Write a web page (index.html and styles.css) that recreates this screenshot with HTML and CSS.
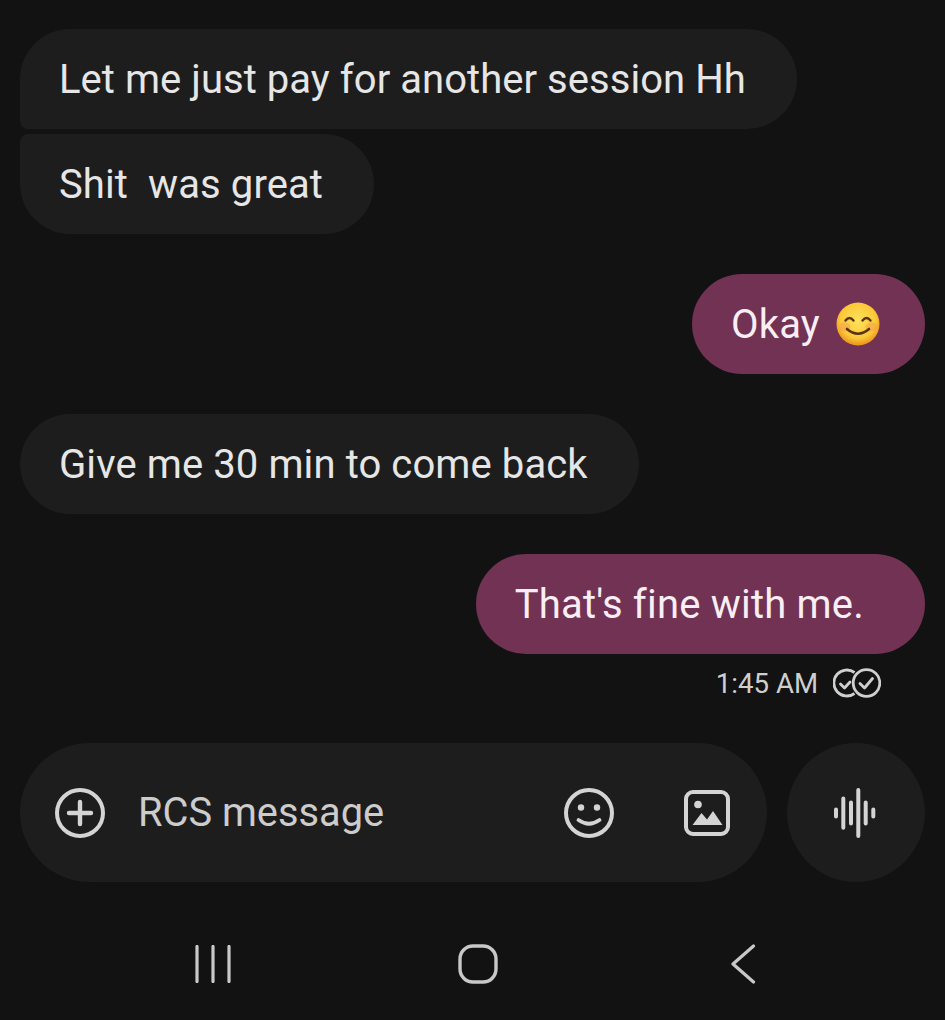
FILE: index.html
```html
<!DOCTYPE html>
<html lang="en">
<head>
<meta charset="utf-8">
<title>Messages</title>
<link rel="stylesheet" href="styles.css">
</head>
<body>
<main class="screen">
  <section class="thread">
    <div class="row in first"><div class="bubble in tail-bottom">Let me just pay for another session Hh</div></div>
    <div class="row in second"><div class="bubble in tail-top wide">Shit&nbsp; was great</div></div>
    <div class="row out gap"><div class="bubble out with-emoji"><span>Okay</span><svg class="emoji" viewBox="0 0 44 44" aria-hidden="true">
        <defs>
          <radialGradient id="face" cx="50%" cy="42%" r="55%">
            <stop offset="0%" stop-color="#fde25a"/>
            <stop offset="75%" stop-color="#fbc93a"/>
            <stop offset="100%" stop-color="#ee9a1e"/>
          </radialGradient>
        </defs>
        <circle cx="22" cy="22" r="21.5" fill="url(#face)"/>
        <ellipse cx="8.5" cy="25" rx="6" ry="4.5" fill="#f4a04e" opacity=".55"/>
        <ellipse cx="35.5" cy="25" rx="6" ry="4.5" fill="#f4a04e" opacity=".55"/>
        <path d="M9.5 18.5q4-5 8 0M26.500 18.500q4-5 8 0" fill="none" stroke="#5a3410" stroke-width="2.4" stroke-linecap="round"/>
        <path d="M11 27q11 9.500 22 0" fill="none" stroke="#5a3410" stroke-width="2.6" stroke-linecap="round"/>
      </svg></div></div>
    <div class="row in gap"><div class="bubble in wide">Give me 30 min to come back</div></div>
    <div class="row out gap"><div class="bubble out">That's fine with me.</div></div>
    <div class="status">
      <span class="time">1:45 AM</span>
      <svg class="ticks" viewBox="0 0 48 32" aria-hidden="true">
        <path d="M21.500 5.500A13 13 0 1 0 21.500 26.500" fill="none" stroke="#cfcfcf" stroke-width="2.800"/>
        <circle cx="33.500" cy="16" r="13.300" fill="none" stroke="#cfcfcf" stroke-width="2.800"/>
        <path d="M27 16.500l4.500 4.500 8-9.500" fill="none" stroke="#cfcfcf" stroke-width="2.800" stroke-linecap="round" stroke-linejoin="round"/>
        <path d="M7.500 17l4 4 5.500-6" fill="none" stroke="#cfcfcf" stroke-width="2.800" stroke-linecap="round" stroke-linejoin="round"/>
      </svg>
    </div>
  </section>

  <section class="composer">
    <div class="field">
      <svg class="icon plus" viewBox="0 0 50 50" aria-hidden="true">
        <circle cx="25" cy="25" r="23" fill="none" stroke="#d4d4d4" stroke-width="4"/>
        <path d="M25 14v22M14 25h22" fill="none" stroke="#d4d4d4" stroke-width="4.400" stroke-linecap="round"/>
      </svg>
      <span class="placeholder">RCS message</span>
      <svg class="icon smile" viewBox="0 0 50 50" aria-hidden="true">
        <circle cx="25" cy="25" r="23" fill="none" stroke="#d4d4d4" stroke-width="4"/>
        <circle cx="17" cy="19.500" r="3.200" fill="#d4d4d4"/>
        <circle cx="33" cy="19.500" r="3.200" fill="#d4d4d4"/>
        <path d="M14.500 32q10.500 7.500 21 0" fill="none" stroke="#d4d4d4" stroke-width="3.800" stroke-linecap="round"/>
      </svg>
      <svg class="icon gallery" viewBox="0 0 46 46" aria-hidden="true">
        <rect x="2" y="2" width="42" height="42" rx="7" fill="none" stroke="#d4d4d4" stroke-width="4"/>
        <circle cx="14" cy="14.500" r="3.800" fill="#d4d4d4"/>
        <path d="M8.500 35l9-12 5.500 6.500 6-8.500 9.500 14z" fill="#d4d4d4"/>
      </svg>
    </div>
    <div class="mic">
      <svg class="wave" viewBox="0 0 44 50" aria-hidden="true">
        <path d="M2 21.500v7M9.300 10.500v29.300M17 14.500v21M24.300 2v46M31.700 14.500v21M39.300 21.500v7" fill="none" stroke="#d4d4d4" stroke-width="4" stroke-linecap="round"/>
      </svg>
    </div>
  </section>

  <nav class="navbar">
    <svg class="nav recents" viewBox="0 0 38 38" aria-hidden="true">
      <path d="M3 1.500v35M19 1.500v35M35 1.500v35" fill="none" stroke="#c8c8c8" stroke-width="3.200" stroke-linecap="round"/>
    </svg>
    <svg class="nav home" viewBox="0 0 40 40" aria-hidden="true">
      <rect x="2" y="2" width="36" height="36" rx="13" fill="none" stroke="#c8c8c8" stroke-width="3.400"/>
    </svg>
    <svg class="nav back" viewBox="0 0 26 40" aria-hidden="true">
      <path d="M23.500 2 3 20l20.500 18" fill="none" stroke="#c8c8c8" stroke-width="3.200" stroke-linecap="round" stroke-linejoin="round"/>
    </svg>
  </nav>
</main>
</body>
</html>
```
FILE: styles.css
```css
* { box-sizing: border-box; }
html, body { margin: 0; padding: 0; background: #121212; }
body { width: 945px; height: 1020px; overflow: hidden; font-family: Roboto, "Liberation Sans", sans-serif; }
.screen { display: flex; flex-direction: column; height: 1020px; padding: 29px 20px 0; }
.thread { display: flex; flex-direction: column; }
.row { display: flex; }
.row.in { justify-content: flex-start; }
.row.out { justify-content: flex-end; }
.row.second { margin-top: 5px; }
.row.gap { margin-top: 40px; }
.bubble { height: 100px; border-radius: 50px; display: flex; align-items: center; gap: 16px; font-size: 40px; font-weight: 400; white-space: nowrap; }
.bubble.in { padding: 0 51px 0 39px; background: #1d1d1d; color: #e6e6e6; letter-spacing: .05px; }
.bubble.in.wide { letter-spacing: .1px; }
.bubble.out { padding: 0 61px 0 39px; background: #723254; color: #f8eef4; letter-spacing: .2px; }
.bubble.with-emoji { padding-right: 45px; }
.bubble.tail-bottom { border-bottom-left-radius: 8px; }
.bubble.tail-top { border-top-left-radius: 8px; }
.emoji { width: 44px; height: 44px; flex: none; }
.status { display: flex; justify-content: flex-end; align-items: center; gap: 15px; height: 32px; margin-top: 13px; padding-right: 44px; color: #cfcfcf; font-size: 27.6px; }
.ticks { width: 48px; height: 32px; flex: none; }
.composer { display: flex; gap: 20px; height: 139px; margin-top: 44px; }
.field { flex: 1; display: flex; align-items: center; background: #1d1d1d; border-radius: 70px; padding: 0 37px 0 35px; color: #cfcfcf; }
.icon { flex: none; width: 50px; height: 50px; }
.placeholder { flex: 1; margin-left: 33px; font-size: 39.8px; font-weight: 400; color: #cccccc; }
.gallery { width: 46px; height: 46px; margin-left: 70px; }
.mic { flex: none; width: 138px; height: 139px; border-radius: 50%; background: #1d1d1d; display: flex; align-items: center; justify-content: center; }
.wave { width: 44px; height: 50px; }
.navbar { display: flex; align-items: center; height: 38px; margin-top: 63px; padding-left: 174px; }
.nav { flex: none; }
.recents { width: 38px; height: 38px; }
.home { width: 40px; height: 40px; margin-left: 226px; }
.back { width: 26px; height: 40px; margin-left: 232px; }
```
